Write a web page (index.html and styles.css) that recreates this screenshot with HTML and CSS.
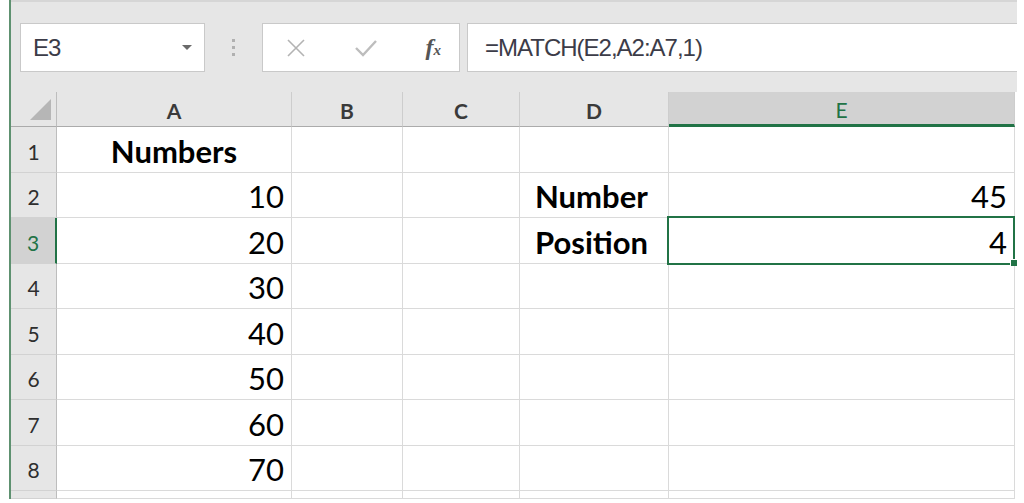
FILE: index.html
```html
<!DOCTYPE html>
<html lang="en">
<head>
  <meta charset="UTF-8" />
  <title>MATCH example</title>
  <link rel="stylesheet" href="styles.css">
</head>
<body>
  <div class="app">
    <div class="formula-bar">
      <div class="name-box">
        <span>E3</span>
        <span class="caret"></span>
      </div>
      <div class="splitter"><i></i><i></i><i></i></div>
      <div class="fx-buttons">
        <svg width="22" height="22" viewBox="0 0 22 22"><path d="M3 3 L19 19 M19 3 L3 19" stroke="#b3b3b3" stroke-width="1.6" fill="none"/></svg>
        <svg width="26" height="22" viewBox="0 0 26 22"><path d="M3 11 L10 18 L23 4" stroke="#bdbdbd" stroke-width="2.4" fill="none"/></svg>
        <span class="fx">f<small>x</small></span>
      </div>
      <div class="formula">=MATCH(E2,A2:A7,1)</div>
    </div>

    <div class="sheet">
      <div class="hd corner"><span class="tri"></span></div>
      <div class="hd col">A</div>
      <div class="hd col">B</div>
      <div class="hd col">C</div>
      <div class="hd col">D</div>
      <div class="hd col active">E</div>

      <div class="hd row">1</div>
      <div class="cell bold center">Numbers</div>
      <div class="cell"></div>
      <div class="cell"></div>
      <div class="cell"></div>
      <div class="cell"></div>

      <div class="hd row">2</div>
      <div class="cell num">10</div>
      <div class="cell"></div>
      <div class="cell"></div>
      <div class="cell bold">Number</div>
      <div class="cell num">45</div>

      <div class="hd row active">3</div>
      <div class="cell num">20</div>
      <div class="cell"></div>
      <div class="cell"></div>
      <div class="cell bold">Position</div>
      <div class="cell num selected">4<span class="handle"></span></div>

      <div class="hd row">4</div>
      <div class="cell num">30</div>
      <div class="cell"></div>
      <div class="cell"></div>
      <div class="cell"></div>
      <div class="cell"></div>

      <div class="hd row">5</div>
      <div class="cell num">40</div>
      <div class="cell"></div>
      <div class="cell"></div>
      <div class="cell"></div>
      <div class="cell"></div>

      <div class="hd row">6</div>
      <div class="cell num">50</div>
      <div class="cell"></div>
      <div class="cell"></div>
      <div class="cell"></div>
      <div class="cell"></div>

      <div class="hd row">7</div>
      <div class="cell num">60</div>
      <div class="cell"></div>
      <div class="cell"></div>
      <div class="cell"></div>
      <div class="cell"></div>

      <div class="hd row">8</div>
      <div class="cell num">70</div>
      <div class="cell"></div>
      <div class="cell"></div>
      <div class="cell"></div>
      <div class="cell"></div>

      <div class="hd row"></div>
      <div class="cell"></div>
      <div class="cell"></div>
      <div class="cell"></div>
      <div class="cell"></div>
      <div class="cell"></div>
    </div>
  </div>
</body>
</html>
```

FILE: styles.css
```css
body {
  margin: 0;
  background: #fff;
}

.app {
  width: 1006px;
  height: 499px;
  margin-left: 9px;
  border-left: 2px solid #5e9170;
  overflow: hidden;
  background: #fff;
}

/* formula bar */
.formula-bar {
  display: flex;
  align-items: stretch;
  height: 92px;
  box-sizing: border-box;
  padding: 21px 0 20px 9px;
  background: #e6e6e6;
  border-top: 2px solid #d6d6d6;
  font-family: "Liberation Sans", Arial, sans-serif;
  font-size: 24px;
  letter-spacing: -1px;
  color: #3c3c48;
}

.name-box,
.fx-buttons,
.formula {
  background: #fff;
  border: 1px solid #c9c9c9;
  display: flex;
  align-items: center;
}

.name-box {
  width: 185px;
  box-sizing: border-box;
  padding: 0 12px;
  justify-content: space-between;
}

.caret {
  width: 0;
  height: 0;
  border-left: 5px solid transparent;
  border-right: 5px solid transparent;
  border-top: 5px solid #6a6a6a;
}

.splitter {
  width: 57px;
  display: flex;
  flex-direction: column;
  align-items: center;
  justify-content: center;
  gap: 4px;
}

.splitter i {
  width: 3px;
  height: 3px;
  background: #b0b0b0;
}

.fx-buttons {
  width: 198px;
  box-sizing: border-box;
  padding: 0 18px 0 22px;
  justify-content: space-between;
}

.fx {
  font-family: "Liberation Serif", "Times New Roman", serif;
  font-style: italic;
  font-weight: bold;
  font-size: 24px;
  letter-spacing: 0;
  color: #555;
}

.fx small {
  font-size: 15px;
}

.formula {
  flex: 1;
  margin-left: 7px;
  border-right: none;
  padding-left: 17px;
}

/* grid */
.sheet {
  display: grid;
  grid-template-columns: 46px 235px 111px 117px 149px 346px;
  grid-template-rows: 35px repeat(8, 45.5px) 8px;
  font-family: Lato, "Open Sans", sans-serif;
}

.hd {
  background: #e6e6e6;
  color: #444;
  display: flex;
  align-items: center;
  justify-content: center;
  box-sizing: border-box;
}

.corner {
  border-right: 1px solid #bdbdbd;
  border-bottom: 1px solid #ababab;
  position: relative;
}

.tri {
  position: absolute;
  right: 5px;
  bottom: 6px;
  width: 0;
  height: 0;
  border-left: 21px solid transparent;
  border-bottom: 21px solid #b6b6b6;
}

.col {
  font-size: 21px;
  font-weight: bold;
  color: #3a3a3a;
  border-right: 1px solid #cdcdcd;
  border-bottom: 1px solid #ababab;
  padding-top: 2px;
}

.col.active {
  background: #d2d2d2;
  color: #217346;
  font-weight: normal;
  border-bottom: 3px solid #217346;
}

.row {
  font-size: 21px;
  color: #2e2e2e;
  border-right: 1px solid #bdbdbd;
  border-bottom: 1px solid #d2d2d2;
  padding-top: 4px;
}

.row.active {
  background: #d2d2d2;
  color: #217346;
  border-right: 2px solid #217346;
}

.cell {
  box-sizing: border-box;
  border-right: 1px solid #dadada;
  border-bottom: 1px solid #dadada;
  display: flex;
  align-items: center;
  padding: 3px 6px 0 15px;
  font-size: 31px;
  color: #000;
}

.cell.num {
  justify-content: flex-end;
  padding-right: 7px;
}

.cell.center {
  justify-content: center;
  padding-left: 6px;
}

.bold {
  font-weight: bold;
}

.selected {
  position: relative;
}

.selected::after {
  content: "";
  position: absolute;
  left: -2px;
  top: -2px;
  right: -1px;
  bottom: -2px;
  border: 2px solid #217346;
}

.handle {
  position: absolute;
  right: -3px;
  bottom: -3px;
  width: 6px;
  height: 6px;
  background: #217346;
  border-left: 1px solid #fff;
  border-top: 1px solid #fff;
  z-index: 1;
}
```
